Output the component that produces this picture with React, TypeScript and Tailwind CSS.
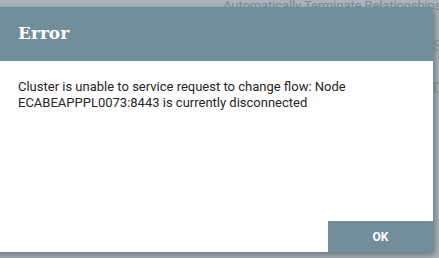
export default function App() {
  return (
    <div className="relative h-[258px] w-[439px] overflow-hidden bg-[#a7b4bb] font-['Roboto','Liberation_Sans',sans-serif]">
      {/* background page, dimmed behind the dialog */}
      <div className="absolute left-[223px] top-[-4px] whitespace-nowrap text-[13px] tracking-[-0.1px] text-[#7a8c95]">
        Automatically Terminate Relationships
      </div>
      <div className="absolute left-[433px] top-[36px] whitespace-nowrap text-[14px] text-[#8d9ca4]">Se</div>
      <div className="absolute left-[433px] top-[78px] whitespace-nowrap text-[14px] text-[#8d9ca4]">Dr</div>

      {/* dialog */}
      <div className="absolute left-[-20px] top-[7px] flex h-[245px] w-[453px] flex-col bg-white shadow-[2px_3px_6px_rgba(0,0,0,0.35)]">
        <div className="flex h-[54px] items-center bg-[#728e9b] pl-[38px]">
          <h1 className="font-['DejaVu_Serif',serif] text-[17px] font-bold text-white">Error</h1>
        </div>
        <div className="flex-1 pl-[38px] pr-4 pt-[18px] text-[13px] leading-[16px] text-[#262626]">
          Cluster is unable to service request to change flow: Node
          <br />
          ECABEAPPPL0073:8443 is currently disconnected
        </div>
        <div className="flex justify-end">
          <button className="h-[31px] w-[105px] bg-[#728e9b] text-[12px] font-bold text-white">OK</button>
        </div>
      </div>
    </div>
  );
}
